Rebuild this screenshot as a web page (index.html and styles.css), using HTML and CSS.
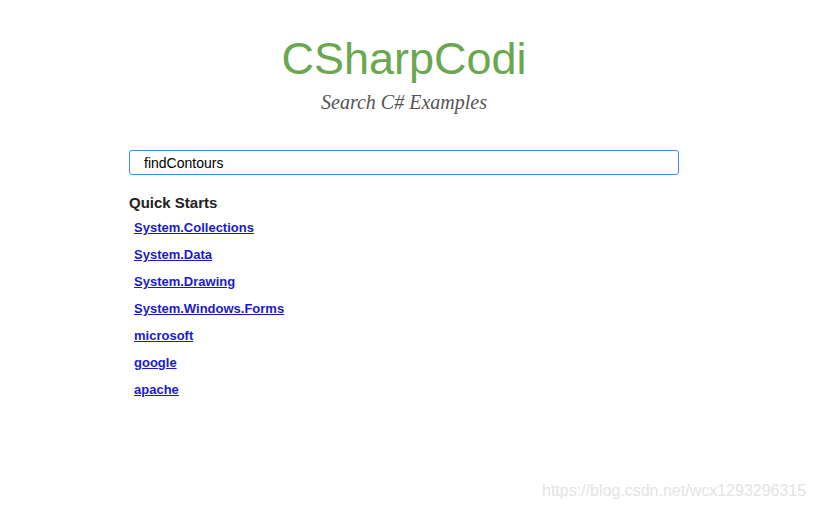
FILE: index.html
```html
<!DOCTYPE html>
<html>
<head>
<meta charset="utf-8">
<link rel="stylesheet" href="styles.css">
</head>
<body>
<div class="page">
  <header class="head">
    <h1 class="logo">CSharpCodi</h1>
    <p class="tagline">Search C# Examples</p>
  </header>
  <div class="search">
    <input class="search-input" type="text" value="findContours">
  </div>
  <section class="quick">
    <h2 class="quick-title">Quick Starts</h2>
    <ul class="links">
      <li><a href="#">System.Collections</a></li>
      <li><a href="#">System.Data</a></li>
      <li><a href="#">System.Drawing</a></li>
      <li><a href="#">System.Windows.Forms</a></li>
      <li><a href="#">microsoft</a></li>
      <li><a href="#">google</a></li>
      <li><a href="#">apache</a></li>
    </ul>
  </section>
</div>
<div class="watermark">https://blog.csdn.net/wcx1293296315</div>
</body>
</html>
```
FILE: styles.css
```css
html, body {
  margin: 0;
  padding: 0;
  background: #fff;
  font-family: "Liberation Sans", Arial, sans-serif;
}
body {
  width: 814px;
  height: 510px;
  position: relative;
  overflow: hidden;
}
.page {
  width: 550px;
  margin-left: 129px;
  padding-top: 33px;
}
.head {
  text-align: center;
}
.logo {
  margin: 0;
  font-weight: normal;
  font-size: 45px;
  line-height: 52px;
  color: #6aa84f;
}
.tagline {
  margin: 0;
  padding-top: 3px;
  font-family: "Liberation Serif", "DejaVu Serif", serif;
  font-style: italic;
  font-size: 20px;
  line-height: 29px;
  color: #555;
}
.search {
  margin-top: 33px;
}
.search-input {
  box-sizing: border-box;
  display: block;
  width: 550px;
  height: 25px;
  border: 1px solid #3a8ee6;
  border-radius: 3px;
  padding: 0 14px;
  font-family: "Liberation Sans", Arial, sans-serif;
  font-size: 14px;
  color: #000;
  outline: none;
}
.quick {
  margin-top: 19px;
}
.quick-title {
  margin: 0;
  font-size: 15px;
  line-height: 18px;
  font-weight: bold;
  color: #222;
}
.links {
  list-style: none;
  margin: 7px 0 0;
  padding: 0 0 0 5px;
}
.links li {
  height: 27px;
  line-height: 15px;
}
.links a {
  font-size: 13px;
  font-weight: bold;
  color: #1a1acc;
  text-decoration: underline;
}
.watermark {
  position: absolute;
  left: 542px;
  top: 482px;
  font-size: 16px;
  color: #e4e4e4;
}
```
